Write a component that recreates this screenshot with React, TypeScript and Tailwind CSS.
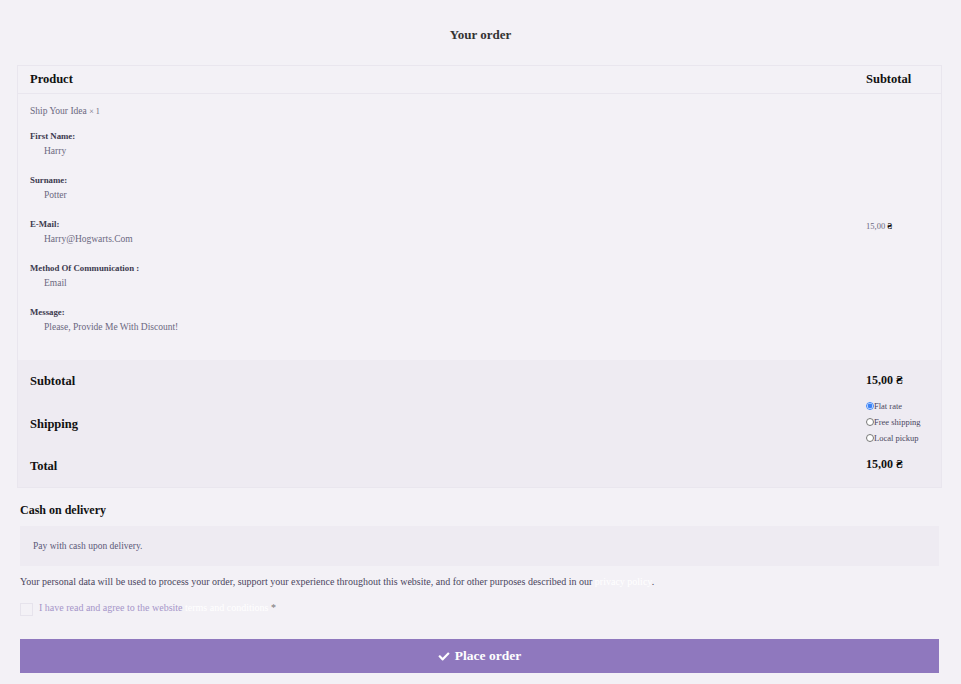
import React from 'react';

const serif = { fontFamily: '"Liberation Serif", "DejaVu Serif", serif' };

const fields = [
  { label: 'First Name:', value: 'Harry' },
  { label: 'Surname:', value: 'Potter' },
  { label: 'E-Mail:', value: 'Harry@Hogwarts.Com' },
  { label: 'Method Of Communication :', value: 'Email' },
  { label: 'Message:', value: 'Please, Provide Me With Discount!' },
];

function Price({ size }: { size: 'sm' | 'lg' }) {
  if (size === 'sm') {
    return (
      <span className="text-[8.5px] text-[#6b6880]">
        15,00 <span className="font-bold text-black">₴</span>
      </span>
    );
  }
  return (
    <span className="text-[12px] font-bold text-[#111]">
      15,00 <span className="text-black">₴</span>
    </span>
  );
}

export default function App() {
  return (
    <div className="min-h-[684px] w-full bg-[#f3f1f6] pt-[27px]" style={serif}>
      <h3 className="text-center text-[13px] font-bold leading-4 text-[#333]">Your order</h3>

      <div className="mx-[17px] mt-[22px] w-[925px]">
        {/* order table */}
        <div className="border border-[#e9e6ee]">
          <div className="grid h-[28px] grid-cols-[1fr_75px] items-center border-b border-[#e9e6ee] text-[12.5px] font-bold text-[#111]">
            <div className="pl-[12px]">Product</div>
            <div>Subtotal</div>
          </div>

          <div className="grid h-[266px] grid-cols-[1fr_75px]">
            <div className="pl-[12px] pt-[11px]">
              <div className="text-[9.5px] leading-[12px] text-[#6b6880]">
                Ship Your Idea <span className="text-[8px]">× 1</span>
              </div>
              <div className="mt-[13px] flex flex-col gap-[19px]">
                {fields.map((f) => (
                  <div key={f.label}>
                    <div className="text-[8.8px] font-bold leading-[10px] text-[#3c3a4e]">{f.label}</div>
                    <div className="mt-[5px] pl-[14px] text-[9.5px] leading-[10px] text-[#6b6880]">{f.value}</div>
                  </div>
                ))}
              </div>
            </div>
            <div className="flex items-center pb-[2px]">
              <Price size="sm" />
            </div>
          </div>

          <div className="grid grid-cols-[1fr_75px] bg-[#eeebf2] text-[12.5px] font-bold text-[#111]">
            <div className="flex h-[43px] items-center pl-[12px]">Subtotal</div>
            <div className="flex h-[43px] items-center pb-[3px]">
              <Price size="lg" />
            </div>
            <div className="flex h-[42px] items-center pl-[12px]">Shipping</div>
            <div className="flex h-[42px] flex-col justify-center gap-[4px] pb-[4px] text-[8.5px] font-normal text-[#4a4660]">
              {['Flat rate', 'Free shipping', 'Local pickup'].map((m, i) => (
                <label key={m} className="flex items-center leading-[12px]">
                  <input
                    type="radio"
                    name="ship"
                    defaultChecked={i === 0}
                    className="m-0 h-[8px] w-[8px] accent-[#3b82f6]"
                  />
                  <span>{m}</span>
                </label>
              ))}
            </div>
            <div className="flex h-[42px] items-center pl-[12px]">Total</div>
            <div className="flex h-[42px] items-center pb-[4px]">
              <Price size="lg" />
            </div>
          </div>
        </div>

        {/* payment */}
        <div className="px-[3px]">
          <h4 className="mt-[15px] text-[12px] font-bold leading-[14px] text-[#111]">Cash on delivery</h4>
          <div className="mt-[9px] flex h-[40px] items-center bg-[#eeebf2] pl-[13px] text-[9.5px] text-[#5b5878]">
            Pay with cash upon delivery.
          </div>

          <p className="mt-[10px] text-[10px] leading-[12px] text-[#4a4660]">
            Your personal data will be used to process your order, support your experience throughout this website, and
            for other purposes described in our <span className="text-white">privacy policy</span>.
          </p>

          <label className="mt-[15px] flex items-start gap-[6px]">
            <span className="h-[13px] w-[13px] shrink-0 border border-[#e6e3ec] bg-[#f3f1f6]" />
            <span className="text-[10px] leading-[10px] text-[#a696c9]">
              I have read and agree to the website <span className="text-white">terms and conditions</span>
              <span className="text-[#777]"> *</span>
            </span>
          </label>

          <button className="mt-[23px] flex h-[34px] w-[919px] items-center justify-center gap-[5px] bg-[#8f78be] text-[13.5px] font-bold text-white">
            <svg width="12" height="11" viewBox="0 0 512 512" fill="currentColor">
              <path d="M173.9 439.4l-166.4-166.4c-10-10-10-26.2 0-36.2l36.2-36.2c10-10 26.2-10 36.2 0L192 312.7 432.1 72.6c10-10 26.2-10 36.2 0l36.2 36.2c10 10 10 26.2 0 36.2L210.1 439.4c-10 10-26.2 10-36.2 0z" />
            </svg>
            Place order
          </button>
        </div>
      </div>
    </div>
  );
}
